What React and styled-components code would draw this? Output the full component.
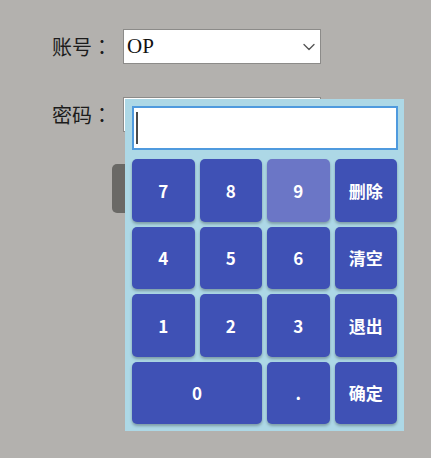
import React from 'react';
import styled, { createGlobalStyle } from 'styled-components';
import { ChevronDown } from 'lucide-react';

const GlobalStyle = createGlobalStyle`
  html, body {
    margin: 0;
    padding: 0;
    background: #b3b1ae;
  }
  body {
    font-family: "Liberation Serif", "Noto Sans CJK SC", serif;
  }
`;

const Page = styled.div`
  position: relative;
  width: 431px;
  height: 458px;
  box-sizing: border-box;
  padding: 29px 0 0 52px;
  overflow: hidden;
`;

const Form = styled.div`
  display: flex;
  flex-direction: column;
  gap: 33px;
`;

const Row = styled.div`
  display: flex;
  align-items: center;
  height: 35px;
`;

const Label = styled.span`
  width: 71px;
  font-family: "Noto Sans CJK TC", "Noto Sans CJK SC", serif;
  font-size: 20px;
  color: #1c1c1c;
  line-height: 1;
`;

const Field = styled.div`
  box-sizing: border-box;
  width: 198px;
  height: 35px;
  border: 1px solid #8c8b89;
  background: #fff;
  display: flex;
  align-items: center;
  justify-content: space-between;
  padding: 0 1px 0 3px;
  font-family: "Liberation Serif", serif;
  font-size: 21px;
  color: #111;
`;

const LoginButton = styled.div`
  margin: 32px 0 0 60px;
  width: 200px;
  height: 49px;
  border-radius: 5px;
  background: #6a6966;
`;

const Keypad = styled.div`
  position: absolute;
  left: 125px;
  top: 99px;
  width: 279px;
  box-sizing: border-box;
  padding: 7px;
  background: #add8e6;
  display: flex;
  flex-direction: column;
  gap: 9px;
`;

const Display = styled.div`
  box-sizing: border-box;
  height: 44px;
  width: 266px;
  background: #fff;
  border: 2px solid #4f9ade;
  display: flex;
  align-items: center;
  padding-left: 2px;
`;

const Caret = styled.span`
  width: 2px;
  height: 32px;
  background: #4a4a4a;
`;

const Keys = styled.div`
  display: grid;
  grid-template-columns: repeat(4, 62.5px);
  grid-template-rows: repeat(4, 62.5px);
  gap: 5px;
`;

const Key = styled.div`
  grid-column: span ${(p) => p.$span || 1};
  border-radius: 5px;
  background: ${(p) => (p.$active ? '#6b76c6' : '#3f51b5')};
  box-shadow: 0 2px 3px rgba(0, 0, 0, 0.28);
  color: #fff;
  display: flex;
  align-items: center;
  justify-content: center;
  font-family: "Noto Sans CJK SC", "Noto Sans", sans-serif;
  font-weight: 700;
  font-size: 17px;
`;

const keys = [
  { label: '7' }, { label: '8' }, { label: '9', active: true }, { label: '删除' },
  { label: '4' }, { label: '5' }, { label: '6' }, { label: '清空' },
  { label: '1' }, { label: '2' }, { label: '3' }, { label: '退出' },
  { label: '0', span: 2 }, { label: '.' }, { label: '确定' },
];

export default function App() {
  return (
    <Page>
      <GlobalStyle />
      <Form>
        <Row>
          <Label>账号：</Label>
          <Field>
            <span>OP</span>
            <ChevronDown size={20} strokeWidth={1.6} color="#555" />
          </Field>
        </Row>
        <Row>
          <Label>密码：</Label>
          <Field />
        </Row>
      </Form>
      <LoginButton />

      <Keypad>
        <Display>
          <Caret />
        </Display>
        <Keys>
          {keys.map((k) => (
            <Key key={k.label} $span={k.span} $active={k.active}>
              {k.label}
            </Key>
          ))}
        </Keys>
      </Keypad>
    </Page>
  );
}
